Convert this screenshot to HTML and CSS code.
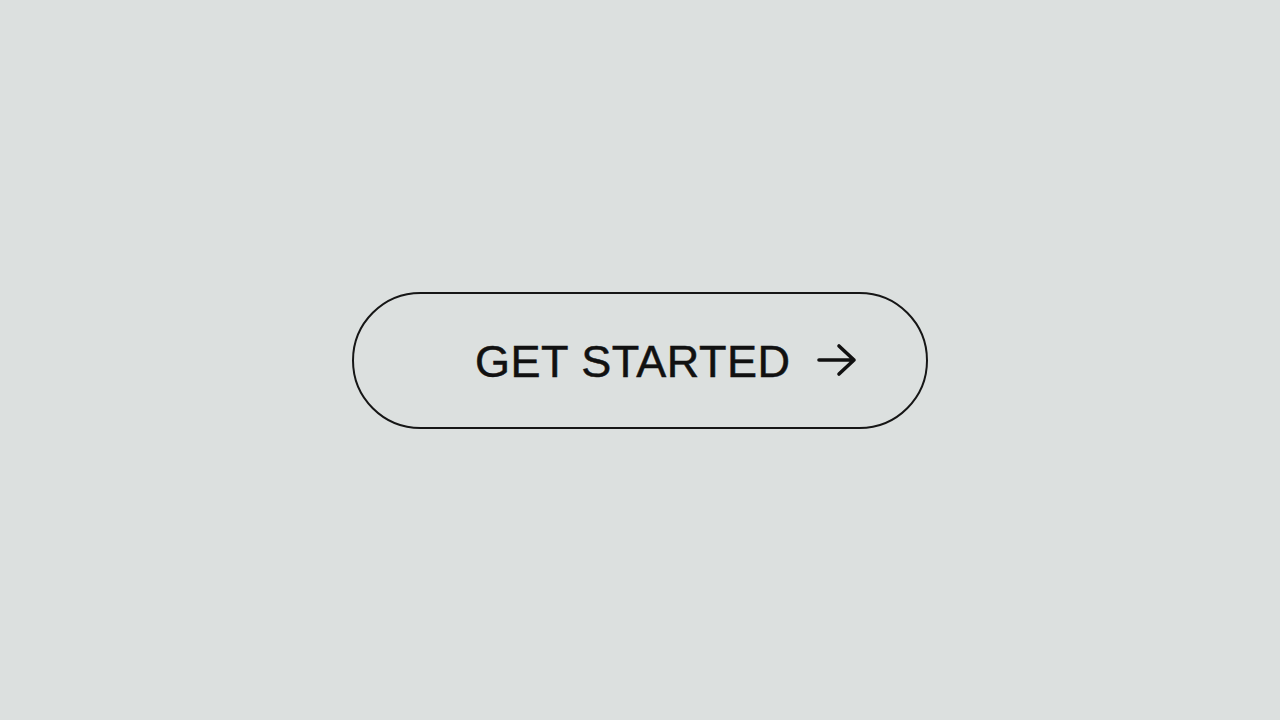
FILE: index.html
```html
<!DOCTYPE html>
<html lang="en">
<head>
    <meta charset="UTF-8">
    <meta name="viewport" content="width=device-width, initial-scale=1.0">
    <title>Get Started</title>
    <link rel="stylesheet" href="styles.css">
</head>
<body>
    <main class="stage">
        <button class="cta" type="button">
            <span class="cta-label">GET STARTED</span>
            <svg class="cta-arrow" width="40" height="34" viewBox="0 0 40 34" aria-hidden="true">
                <path d="M2 17 H37 M22 3 L37 17 L22 31" fill="none" stroke="currentColor" stroke-width="3.6" stroke-linecap="round" stroke-linejoin="round"/>
            </svg>
        </button>
    </main>
</body>
</html>
```

FILE: styles.css
```css
html, body {
    margin: 0;
    height: 100%;
}
body {
    background: #dce0df;
    font-family: "Liberation Sans", Arial, sans-serif;
}
.stage {
    height: 100%;
    display: flex;
    align-items: center;
    justify-content: center;
}
.cta {
    box-sizing: border-box;
    width: 576px;
    height: 137px;
    display: flex;
    align-items: center;
    gap: 26px;
    padding: 0 0 0 121px;
    background: transparent;
    border: 2px solid #161616;
    border-radius: 70px;
    color: #111;
    font-family: inherit;
    cursor: pointer;
}
.cta-label {
    font-size: 45px;
    letter-spacing: 0.5px;
    line-height: 1;
    margin-top: 2px;
    -webkit-text-stroke: 0.5px currentColor;
}
.cta-arrow {
    display: block;
}
```
